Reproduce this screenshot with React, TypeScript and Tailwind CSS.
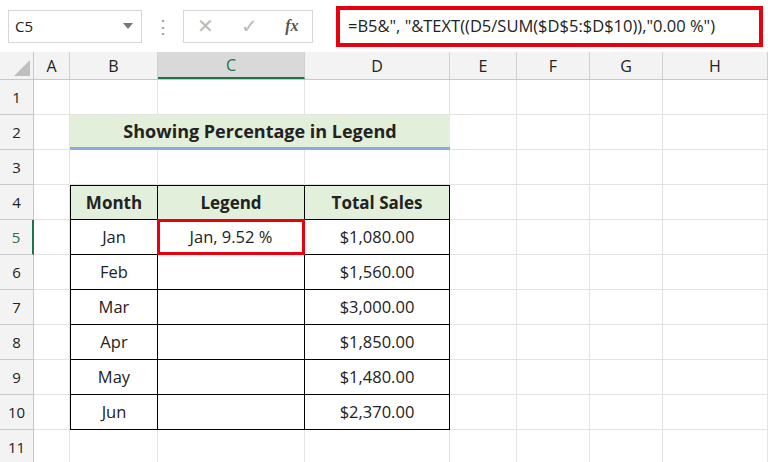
import React from "react";

const cols = [
  { k: "A", w: 36 }, { k: "B", w: 88 }, { k: "C", w: 147 }, { k: "D", w: 145 },
  { k: "E", w: 67 }, { k: "F", w: 73 }, { k: "G", w: 73 }, { k: "H", w: 105 },
];
const data: Record<number, string[]> = {
  5: ["Jan", "Jan, 9.52 %", "$1,080.00"],
  6: ["Feb", "", "$1,560.00"],
  7: ["Mar", "", "$3,000.00"],
  8: ["Apr", "", "$1,850.00"],
  9: ["May", "", "$1,480.00"],
  10: ["Jun", "", "$2,370.00"],
};

export default function App() {
  const rows = Array.from({ length: 11 }, (_, i) => i + 1);
  return (
    <div className="w-[768px] h-[462px] overflow-hidden bg-white text-[16px] text-[#222]" style={{ fontFamily: '"Open Sans","Liberation Sans",sans-serif' }}>
      <div className="h-[52px] bg-white flex items-center">
        <div className="ml-[8px] w-[134px] h-[33px] border border-[#d6d6d6] flex items-center px-[6px] justify-between text-[15px]">
          <span>C5</span>
          <span className="w-0 h-0 border-l-[5px] border-r-[5px] border-t-[6px] border-l-transparent border-r-transparent border-t-[#777] mr-[2px]" />
        </div>
        <div className="w-[41px] flex justify-center text-[#999] text-[18px]">⋮</div>
        <div className="w-[130px] h-[33px] border border-[#d6d6d6] flex items-center justify-around text-[#bbb]">
          <span className="text-[20px]">✕</span>
          <span className="text-[20px]">✓</span>
          <span className="text-[#555] italic font-bold text-[16px]" style={{ fontFamily: '"Liberation Serif",serif' }}>fx</span>
        </div>
        <div className="ml-[23px] w-[427px] h-[41px] border-[4px] border-[#e8000f] flex items-center px-[8px] text-[16.5px] whitespace-nowrap">
          =B5&amp;", "&amp;TEXT((D5/SUM($D$5:$D$10)),"0.00 %")
        </div>
      </div>
      <div className="flex h-[28px] bg-[#f3f3f3] border-b border-[#c8c8c8]">
        <div className="w-[34px] border-r border-[#c8c8c8] relative">
          <div className="absolute right-[3px] bottom-[3px] w-0 h-0" style={{ borderBottom: "16px solid #bfbfbf", borderLeft: "16px solid transparent" }} />
        </div>
        {cols.map((c) => (
          <div key={c.k} style={{ width: c.w }} className={`border-r border-[#d0d0d0] flex items-center justify-center text-[16px] ${c.k === "C" ? "bg-[#d9d9d9] text-[#217346] border-b-[2px] border-b-[#217346]" : ""}`}>{c.k}</div>
        ))}
      </div>
      {rows.map((r) => (
        <div key={r} className="flex h-[35px]">
          <div className={`w-[34px] bg-[#f3f3f3] border-r border-b border-[#c8c8c8] flex items-center justify-center text-[15px] ${r === 5 ? "bg-[#d9d9d9] text-[#217346] border-r-[2px] border-r-[#217346]" : ""}`}>{r}</div>
          {cols.map((c, ci) => {
            const inTable = r >= 4 && r <= 10 && ci >= 1 && ci <= 3;
            if (r === 2 && ci === 1) {
              return (
                <div key={c.k} style={{ width: 380 }} className="bg-[#e2efda] border-b-[3px] border-[#8ea9db] flex items-center justify-center font-bold text-[18px]">Showing Percentage in Legend</div>
              );
            }
            if (r === 2 && (ci === 2 || ci === 3)) return null;
            let text = "";
            if (r === 4 && inTable) text = ["Month", "Legend", "Total Sales"][ci - 1];
            if (data[r] && inTable) text = data[r][ci - 1];
            const cls = inTable
              ? `border-r border-b border-black ${ci === 1 ? "border-l" : ""} ${r === 4 ? "border-t bg-[#e2efda] font-bold text-[17px]" : "text-[16.5px]"}`
              : "border-r border-b border-[#e3e3e3]";
            return (
              <div key={c.k} style={{ width: c.w }} className={`${cls} relative flex items-center justify-center`}>
                {text}
                {r === 5 && ci === 2 && (
                  <div className="absolute inset-[-1px] border-[3px] border-[#e8000f]" />
                )}
              </div>
            );
          })}
        </div>
      ))}
    </div>
  );
}
